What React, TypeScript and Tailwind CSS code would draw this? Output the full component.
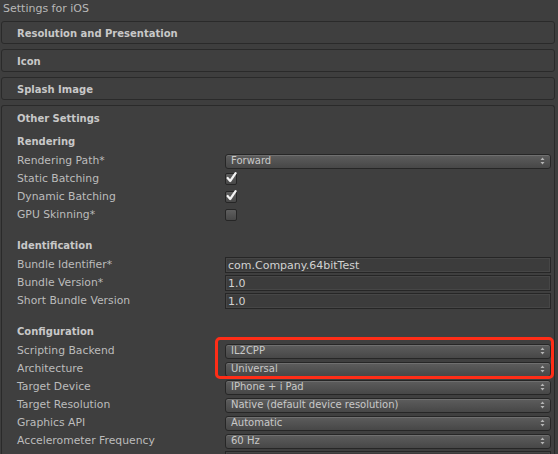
import React from "react";

const font = { fontFamily: '"DejaVu Sans", "Noto Sans", sans-serif' };

type Row =
  | { label: string; kind: "popup"; value: string }
  | { label: string; kind: "check"; checked: boolean }
  | { label: string; kind: "text"; value: string };

const sections: { title: string; rows: Row[] }[] = [
  {
    title: "Rendering",
    rows: [
      { label: "Rendering Path*", kind: "popup", value: "Forward" },
      { label: "Static Batching", kind: "check", checked: true },
      { label: "Dynamic Batching", kind: "check", checked: true },
      { label: "GPU Skinning*", kind: "check", checked: false },
    ],
  },
  {
    title: "Identification",
    rows: [
      { label: "Bundle Identifier*", kind: "text", value: "com.Company.64bitTest" },
      { label: "Bundle Version*", kind: "text", value: "1.0" },
      { label: "Short Bundle Version", kind: "text", value: "1.0" },
    ],
  },
  {
    title: "Configuration",
    rows: [
      { label: "Scripting Backend", kind: "popup", value: "IL2CPP" },
      { label: "Architecture", kind: "popup", value: "Universal" },
      { label: "Target Device", kind: "popup", value: "IPhone + i Pad" },
      { label: "Target Resolution", kind: "popup", value: "Native (default device resolution)" },
      { label: "Graphics API", kind: "popup", value: "Automatic" },
      { label: "Accelerometer Frequency", kind: "popup", value: "60 Hz" },
      { label: "", kind: "text", value: "" },
    ],
  },
];

function Arrows() {
  return (
    <svg width="5" height="8" viewBox="0 0 5 8" className="shrink-0">
      <path d="M2.5 0.5 L4.5 3 L0.5 3 Z" fill="#b5b5b5" />
      <path d="M2.5 7.5 L4.5 5 L0.5 5 Z" fill="#b5b5b5" />
    </svg>
  );
}

function Popup({ value }: { value: string }) {
  return (
    <div className="flex h-[15px] w-full items-center justify-between rounded-[3px] border border-[#262626] bg-gradient-to-b from-[#5d5d5d] to-[#474747] pl-[5px] pr-[5px] text-[10px] leading-none text-[#c9c9c9] shadow-[inset_0_1px_0_rgba(255,255,255,0.12)]">
      <span>{value}</span>
      <Arrows />
    </div>
  );
}

function Check({ checked }: { checked: boolean }) {
  return (
    <div className="relative h-[12px] w-[12px] rounded-[2px] border border-[#262626] bg-gradient-to-b from-[#5f5f5f] to-[#484848]">
      {checked && (
        <svg
          width="11"
          height="11"
          viewBox="0 0 11 11"
          className="absolute left-[0px] top-[-2px]"
        >
          <path
            d="M1.6 6 L4.2 9 L9.6 1.2"
            fill="none"
            stroke="#f4f4f4"
            strokeWidth="2.2"
            strokeLinecap="round"
            strokeLinejoin="round"
          />
        </svg>
      )}
    </div>
  );
}

function TextField({ value }: { value: string }) {
  return (
    <div className="flex h-[16px] w-full items-center border border-[#262626] bg-[#3c3c3c] pl-[2px] text-[11px] leading-none text-[#d2d2d2] shadow-[inset_0_0_0_1px_#464646]">
      {value}
    </div>
  );
}

function Foldout({ title }: { title: string }) {
  return (
    <div className="mb-[5px] flex h-[23px] items-center rounded-[3px] border border-[#2a2a2a] bg-[#3f3f3f] pl-[15px] pt-[1px] text-[10px] font-bold text-[#c8c8c8]">
      {title}
    </div>
  );
}

export default function App() {
  return (
    <div
      className="relative h-[454px] w-[558px] overflow-hidden bg-[#3e3e3e] text-[#bdbdbd]"
      style={font}
    >
      <div className="flex h-[19px] items-center pl-[3px] text-[11px] text-[#b8b8b8]">
        Settings for iOS
      </div>
      <div className="ml-[1px] mr-[3px] mt-[2px]">
        <Foldout title="Resolution and Presentation" />
        <Foldout title="Icon" />
        <Foldout title="Splash Image" />

        <div className="h-[400px] rounded-t-[3px] border border-b-0 border-[#2a2a2a] bg-[#3f3f3f]">
          <div className="flex h-[23px] items-center pl-[15px] pt-[1px] text-[10px] font-bold text-[#c8c8c8]">
            Other Settings
          </div>
          <div className="pl-[15px] pr-[3px] pt-[3px]">
            {sections.map((s, i) => (
              <div key={s.title} className={i > 0 ? "mt-[12px]" : ""}>
                <div className="mb-[2px] flex h-[18px] items-center text-[10px] font-bold text-[#c8c8c8]">
                  {s.title}
                </div>
                {s.rows.map((r, j) => (
                  <div key={j} className="flex h-[18px] items-center">
                    <div className="w-[208px] shrink-0 text-[10.8px] text-[#bcbcbc]">
                      {r.label}
                    </div>
                    <div className="flex flex-1 items-center">
                      {r.kind === "popup" && <Popup value={r.value} />}
                      {r.kind === "check" && <Check checked={r.checked} />}
                      {r.kind === "text" && <TextField value={r.value} />}
                    </div>
                  </div>
                ))}
              </div>
            ))}
          </div>
        </div>
      </div>

      {/* red callout around backend + architecture */}
      <div className="pointer-events-none absolute left-[215px] top-[337px] h-[42px] w-[339px] rounded-[5px] border-[3px] border-[#ff2d17]" />
    </div>
  );
}
